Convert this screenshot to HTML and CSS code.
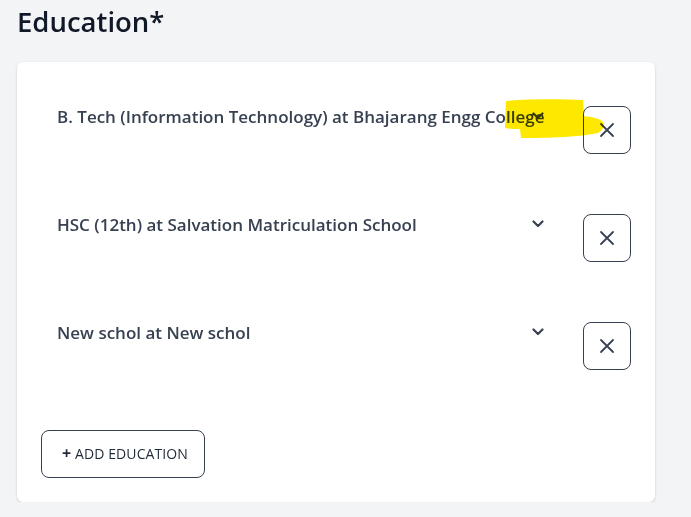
FILE: index.html
```html
<!DOCTYPE html>
<html>
<head>
<meta charset="utf-8">
<link rel="stylesheet" href="styles.css">
</head>
<body>
<h1 class="title">Education*</h1>
<div class="card">
  <div class="row">
    <div class="acc-head">
      <span class="acc-text">B. Tech (Information Technology) at Bhajarang Engg College</span>
      <svg class="chev" viewBox="0 0 12 8" width="12" height="8"><path d="M1.5 1.5 L6 6 L10.5 1.5" fill="none" stroke="#374151" stroke-width="2.2" stroke-linecap="round" stroke-linejoin="round"/></svg>
    </div>
    <button class="del"><svg viewBox="0 0 16 16" width="16" height="16"><path d="M2 2 L14 14 M14 2 L2 14" stroke="#374151" stroke-width="1.8" stroke-linecap="round"/></svg></button>
  </div>
  <div class="row">
    <div class="acc-head">
      <span class="acc-text">HSC (12th) at Salvation Matriculation School</span>
      <svg class="chev" viewBox="0 0 12 8" width="12" height="8"><path d="M1.5 1.5 L6 6 L10.5 1.5" fill="none" stroke="#374151" stroke-width="2.2" stroke-linecap="round" stroke-linejoin="round"/></svg>
    </div>
    <button class="del"><svg viewBox="0 0 16 16" width="16" height="16"><path d="M2 2 L14 14 M14 2 L2 14" stroke="#374151" stroke-width="1.8" stroke-linecap="round"/></svg></button>
  </div>
  <div class="row">
    <div class="acc-head">
      <span class="acc-text">New schol at New schol</span>
      <svg class="chev" viewBox="0 0 12 8" width="12" height="8"><path d="M1.5 1.5 L6 6 L10.5 1.5" fill="none" stroke="#374151" stroke-width="2.2" stroke-linecap="round" stroke-linejoin="round"/></svg>
    </div>
    <button class="del"><svg viewBox="0 0 16 16" width="16" height="16"><path d="M2 2 L14 14 M14 2 L2 14" stroke="#374151" stroke-width="1.8" stroke-linecap="round"/></svg></button>
  </div>
  <div class="add-wrap">
    <button class="add"><span class="plus">+</span> ADD EDUCATION</button>
  </div>
  <svg class="marker" viewBox="0 0 106 42" width="106" height="42"><path d="M6 3 C30 1 60 1 83 2 L84 18 C92 19 99 20 103 24 C105 28 103 32 98 35 C80 39 50 40 21 40 L20 31 C14 31 9 31 5 30 Z" fill="#ffe800"/></svg>
</div>
</body>
</html>
```
FILE: styles.css
```css
* { box-sizing: border-box; }
html, body { margin: 0; padding: 0; }
body {
  background: #f3f4f6;
  font-family: "Open Sans", "Noto Sans", sans-serif;
  color: #111827;
  padding: 0 36px 0 17px;
}
.title {
  margin: 0;
  padding-top: 2px;
  font-size: 27.5px;
  line-height: 40px;
  font-weight: 600;
  color: #111827;
  height: 62px;
}
.card {
  position: relative;
  background: #fff;
  border-radius: 6px;
  box-shadow: 0 1px 3px rgba(0,0,0,0.12), 0 1px 2px rgba(0,0,0,0.06);
  padding: 24px;
  width: 638px;
}
.row {
  display: flex;
  align-items: flex-start;
  gap: 24px;
  margin-bottom: 40px;
}
.acc-head {
  flex: 1;
  min-width: 0;
  display: flex;
  align-items: center;
  padding: 19px 16px;
}
.acc-text {
  flex: 1;
  min-width: 0;
  font-size: 17px;
  line-height: 24px;
  font-weight: 600;
  color: #374151;
  white-space: nowrap;
  overflow: visible;
}
.chev { flex: none; margin-top: -2px; margin-right: -1px; }
.del {
  flex: none;
  width: 48px;
  height: 48px;
  margin-top: 20px;
  border: 1px solid #374151;
  border-radius: 8px;
  background: #fff;
  display: flex;
  align-items: center;
  justify-content: center;
  padding: 0;
}
.add-wrap { padding-top: 20px; }
.add {
  width: 164px;
  height: 48px;
  border: 1px solid #374151;
  border-radius: 8px;
  background: #fff;
  font-family: "Open Sans", "Noto Sans", sans-serif;
  font-size: 14px;
  font-weight: 500;
  color: #1f2937;
  padding: 0 0 2px 4px;
  letter-spacing: 0.1px;
}
.plus { font-weight: 700; font-size: 16px; }
.marker {
  position: absolute;
  left: 483px;
  top: 36px;
  mix-blend-mode: multiply;
}
```
